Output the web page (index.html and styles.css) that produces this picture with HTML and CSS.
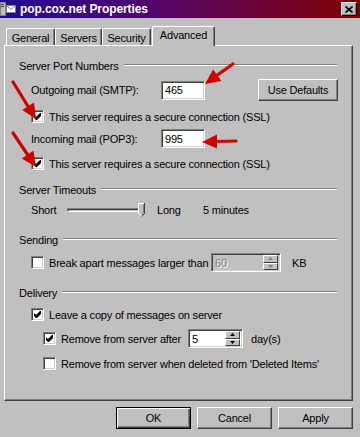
FILE: index.html
```html
<!DOCTYPE html>
<html>
<head>
<meta charset="utf-8">
<link rel="stylesheet" href="styles.css">
</head>
<body>
<div class="window">
  <div class="titlebar">
    <svg class="appicon" width="16" height="16" viewBox="0 0 16 16">
      <rect x="0.5" y="1.5" width="5" height="13" fill="#c0c0c0" stroke="#808080"/>
      <rect x="1" y="3" width="3" height="1" fill="#404040"/>
      <rect x="1" y="5" width="3" height="1" fill="#404040"/>
      <rect x="6.5" y="4.5" width="9" height="7" fill="#fff" stroke="#808080"/>
      <path d="M6.5 4.5 L11 8.5 L15.5 4.5" fill="none" stroke="#808080"/>
    </svg>
    <span class="title">pop.cox.net Properties</span>
    <span class="close">
      <svg width="8" height="7" viewBox="0 0 8 7"><path d="M0.5 0.5 L7.5 6.5 M7.5 0.5 L0.5 6.5" stroke="#000" stroke-width="1.8"/></svg>
    </span>
  </div>

  <div class="tabs">
    <div class="tab t-general">General</div>
    <div class="tab t-servers">Servers</div>
    <div class="tab t-security">Security</div>
    <div class="tab t-advanced active">Advanced</div>
  </div>

  <div class="panel">
    <div class="heading first"><span>Server Port Numbers</span><i class="rule"></i></div>

    <div class="row port-row">
      <span class="port-label">Outgoing mail (SMTP):</span>
      <span class="field port">465</span>
      <span class="btn defaults">Use Defaults</span>
    </div>
    <div class="check lvl1 ssl-1">
      <span class="box"><svg width="9" height="9" viewBox="0 0 9 9"><polygon points="1,3 3,5 7,1 8,1 8,4 4,8 3,8 1,6" fill="#000"/></svg></span>
      <span>This server requires a secure connection (SSL)</span>
    </div>
    <div class="row port-row2">
      <span class="port-label">Incoming mail (POP3):</span>
      <span class="field port">995</span>
    </div>
    <div class="check lvl1 ssl-2">
      <span class="box"><svg width="9" height="9" viewBox="0 0 9 9"><polygon points="1,3 3,5 7,1 8,1 8,4 4,8 3,8 1,6" fill="#000"/></svg></span>
      <span>This server requires a secure connection (SSL)</span>
    </div>

    <div class="heading timeouts"><span>Server Timeouts</span><i class="rule"></i></div>
    <div class="row slider-row">
      <span class="short">Short</span>
      <span class="slider">
        <span class="track"></span>
        <svg class="thumb" width="7" height="14" viewBox="0 0 7 14">
          <polygon points="0.5,0.5 6.5,0.5 6.5,10.5 3.5,13.5 0.5,10.5" fill="#c0c0c0"/>
          <polyline points="3.5,13 0.5,10 0.5,0.5 6,0.5" fill="none" stroke="#fff"/>
          <polyline points="6.5,0 6.5,10.5 3.5,13.5" fill="none" stroke="#404040"/>
          <polyline points="5.5,1.5 5.5,10 3.5,12" fill="none" stroke="#808080"/>
        </svg>
      </span>
      <span class="long">Long</span>
      <span>5 minutes</span>
    </div>

    <div class="heading sending"><span>Sending</span><i class="rule"></i></div>
    <div class="row break-row">
      <span class="box"></span>
      <span class="break-label">Break apart messages larger than</span>
      <span class="field spin disabled"><span class="val">60</span>
        <span class="spinbtns">
          <span class="sb"><svg width="5" height="3" viewBox="0 0 5 3"><polygon points="2.5,0 5,3 0,3" fill="#808080"/></svg></span>
          <span class="sb"><svg width="5" height="3" viewBox="0 0 5 3"><polygon points="0,0 5,0 2.5,3" fill="#808080"/></svg></span>
        </span>
      </span>
      <span class="kb">KB</span>
    </div>

    <div class="heading delivery"><span>Delivery</span><i class="rule"></i></div>
    <div class="check lvl1 leave">
      <span class="box"><svg width="9" height="9" viewBox="0 0 9 9"><polygon points="1,3 3,5 7,1 8,1 8,4 4,8 3,8 1,6" fill="#000"/></svg></span>
      <span>Leave a copy of messages on server</span>
    </div>
    <div class="row after-row">
      <span class="box"><svg width="9" height="9" viewBox="0 0 9 9"><polygon points="1,3 3,5 7,1 8,1 8,4 4,8 3,8 1,6" fill="#000"/></svg></span>
      <span class="after-label">Remove from server after</span>
      <span class="field spin days"><span class="val">5</span>
        <span class="spinbtns">
          <span class="sb"><svg width="5" height="3" viewBox="0 0 5 3"><polygon points="2.5,0 5,3 0,3" fill="#000"/></svg></span>
          <span class="sb"><svg width="5" height="3" viewBox="0 0 5 3"><polygon points="0,0 5,0 2.5,3" fill="#000"/></svg></span>
        </span>
      </span>
      <span class="dayslbl">day(s)</span>
    </div>
    <div class="check lvl2 deleted">
      <span class="box"></span>
      <span>Remove from server when deleted from 'Deleted Items'</span>
    </div>
  </div>

  <div class="buttons">
    <span class="btn default">OK</span>
    <span class="btn">Cancel</span>
    <span class="btn">Apply</span>
  </div>

  <svg class="arrows" width="360" height="437" viewBox="0 0 360 437">
    <g stroke="#d00000" stroke-width="3.2" stroke-linecap="round" fill="none">
      <line x1="13" y1="82" x2="29" y2="108"/>
      <line x1="13" y1="133" x2="28.5" y2="156"/>
      <line x1="233" y1="64" x2="216" y2="76"/>
      <line x1="236" y1="141" x2="215" y2="141.5"/>
    </g>
    <g fill="#d00000">
      <polygon points="22.2,110 34,102.6 36,119"/>
      <polygon points="21.8,158.5 33.4,150.7 36,167"/>
      <polygon points="213.1,69.6 221.3,81 205,84"/>
      <polygon points="217,134.5 217,148.5 202,142"/>
    </g>
  </svg>
</div>
</body>
</html>
```
FILE: styles.css
```css
* { box-sizing: border-box; }

html, body {
  margin: 0;
  padding: 0;
}

body {
  width: 360px;
  height: 437px;
  overflow: hidden;
  background: #c0c0c0;
  font-family: "Liberation Sans", Arial, sans-serif;
  font-size: 11px;
  letter-spacing: -0.2px;
  color: #000;
}

.window {
  position: relative;
  width: 360px;
  height: 437px;
}

/* Title bar */
.titlebar {
  display: flex;
  align-items: center;
  height: 18px;
  background: linear-gradient(90deg, #200a98 0%, #5a0560 50%, #800000 100%);
}

.appicon {
  flex: 0 0 auto;
  margin-left: 0;
}

.title {
  margin-left: 4px;
  color: #fff;
  font-weight: bold;
  font-size: 12px;
  letter-spacing: -0.1px;
}

.close {
  margin-left: auto;
  margin-right: 3px;
  width: 16px;
  height: 14px;
  display: flex;
  align-items: center;
  justify-content: center;
  background: #c0c0c0;
  border-top: 1px solid #fff;
  border-left: 1px solid #fff;
  border-right: 1px solid #000;
  border-bottom: 1px solid #000;
  box-shadow: inset -1px -1px #808080;
}

/* Tabs */
.tabs {
  display: flex;
  align-items: flex-end;
  height: 27px;
  padding-left: 6px;
}

.tab {
  position: relative;
  height: 17px;
  display: flex;
  align-items: center;
  justify-content: center;
  padding-top: 1px;
  border-top: 1px solid #fff;
  border-left: 1px solid #fff;
  border-right: 1px solid #404040;
  border-radius: 2px 2px 0 0;
  box-shadow: inset -1px 0 #808080;
}

.t-general { width: 49px; }
.t-servers { width: 47px; }
.t-security { width: 49px; }

.tab.active {
  width: 63px;
  height: 20px;
  margin-left: 1px;
  margin-bottom: -1px;
  padding-top: 0;
  padding-bottom: 3px;
  background: #c0c0c0;
  z-index: 2;
}

/* Panel */
.panel {
  margin-left: 4px;
  width: 349px;
  height: 356px;
  padding: 0 15px 0 14px;
  border-top: 1px solid #fff;
  border-left: 1px solid #fff;
  border-right: 1px solid #404040;
  border-bottom: 1px solid #404040;
  box-shadow: inset -1px -1px #808080;
}

.heading {
  display: flex;
  align-items: center;
  height: 14px;
}

.heading .rule {
  flex: 1;
  height: 2px;
  margin-left: 5px;
  margin-bottom: 2px;
  border-top: 1px solid #808080;
  border-bottom: 1px solid #fff;
}

.heading.first { margin-top: 13px; }
.heading.timeouts { margin-top: 13px; }
.heading.sending { margin-top: 16px; }
.heading.delivery { margin-top: 14px; }

.row {
  display: flex;
  align-items: center;
}

.port-row {
  height: 22px;
  margin-top: 6px;
  padding-left: 12px;
}

.port-row2 {
  height: 19px;
  margin-top: 6px;
  padding-left: 12px;
}

.port-label {
  width: 130px;
}

.field {
  height: 19px;
  background: #fff;
  border-top: 1px solid #808080;
  border-left: 1px solid #808080;
  border-right: 1px solid #fff;
  border-bottom: 1px solid #fff;
  box-shadow: inset 1px 1px #404040, inset -1px -1px #d4d0c8;
  padding-left: 3px;
  display: flex;
  align-items: center;
}

.field.port {
  width: 44px;
}

.btn {
  display: flex;
  align-items: center;
  justify-content: center;
  width: 75px;
  height: 22px;
  background: #c0c0c0;
  border-top: 1px solid #fff;
  border-left: 1px solid #fff;
  border-right: 1px solid #404040;
  border-bottom: 1px solid #404040;
  box-shadow: inset -1px -1px #808080;
}

.btn.defaults {
  width: 80px;
  margin-left: auto;
  margin-right: -1px;
}

.btn.default {
  border: 1px solid #000;
  box-shadow: inset 1px 1px #fff, inset -1px -1px #404040, inset -2px -2px #808080;
}

/* Checkboxes */
.check {
  display: flex;
  align-items: center;
  height: 13px;
}

.lvl1 { padding-left: 12px; }
.lvl2 { padding-left: 24px; }

.ssl-1 { margin-top: 9px; }
.ssl-2 { margin-top: 9px; }
.leave { margin-top: 8px; }
.deleted { margin-top: 9px; }

.box {
  flex: 0 0 auto;
  width: 13px;
  height: 13px;
  margin-right: 5px;
  background: #fff;
  border-top: 1px solid #808080;
  border-left: 1px solid #808080;
  border-right: 1px solid #fff;
  border-bottom: 1px solid #fff;
  box-shadow: inset 1px 1px #404040, inset -1px -1px #d4d0c8;
  padding: 1px;
}

.box svg { display: block; }

/* Slider */
.slider-row {
  height: 14px;
  margin-top: 6px;
  padding-left: 12px;
}

.short { width: 36px; }

.slider {
  position: relative;
  width: 78px;
  height: 14px;
  display: flex;
  align-items: center;
}

.track {
  width: 78px;
  height: 4px;
  border-top: 1px solid #808080;
  border-left: 1px solid #808080;
  border-right: 1px solid #fff;
  border-bottom: 1px solid #fff;
  box-shadow: inset 1px 1px #404040;
}

.thumb {
  position: absolute;
  right: 0;
  top: 0;
}

.long {
  width: 46px;
  margin-left: 12px;
}

/* Sending */
.break-row {
  height: 19px;
  margin-top: 6px;
  padding-left: 12px;
}

.break-label { width: 162px; }

.spin {
  padding-right: 2px;
}

.spin .val { flex: 1; }

.spin.disabled {
  width: 70px;
  background: #c0c0c0;
  color: #808080;
}

.spin.disabled .val {
  text-shadow: 1px 1px #fff;
}

.spinbtns {
  display: flex;
  flex-direction: column;
  width: 15px;
  height: 15px;
}

.sb {
  flex: 1;
  display: flex;
  align-items: center;
  justify-content: center;
  background: #c0c0c0;
  border-top: 1px solid #fff;
  border-left: 1px solid #fff;
  border-right: 1px solid #404040;
  border-bottom: 1px solid #404040;
}

.sb svg { display: block; }

.kb { margin-left: 11px; }

/* Delivery */
.after-row {
  height: 19px;
  margin-top: 8px;
  padding-left: 24px;
}

.after-label { width: 127px; }

.spin.days { width: 55px; }

.dayslbl { margin-left: 8px; }

/* Dialog buttons */
.buttons {
  display: flex;
  justify-content: flex-end;
  gap: 6px;
  margin-top: 6px;
  padding-right: 7px;
}

/* Annotation arrows */
.arrows {
  position: absolute;
  left: 0;
  top: 0;
  pointer-events: none;
}
```
